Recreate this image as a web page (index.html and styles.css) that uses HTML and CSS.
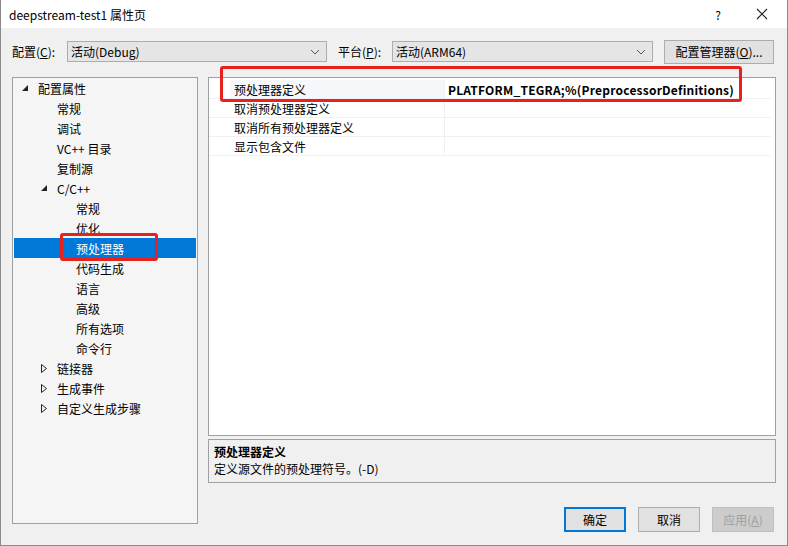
FILE: index.html
```html
<!DOCTYPE html>
<html>
<head>
  <title>deepstream-test1 属性页</title>
  <link rel="stylesheet" href="styles.css">
</head>
<body>
  <div class="window">
    <div class="titlebar">
      <div class="title">deepstream-test1 属性页</div>
      <div class="help">?</div>
      <div class="close">
        <svg width="12" height="12" viewBox="0 0 12 12"><path d="M1 1L11 11M11 1L1 11" stroke="#222" stroke-width="1.1" fill="none"/></svg>
      </div>
    </div>
    <div class="client">
      <div class="configrow">
        <span class="label">配置(<u>C</u>):</span>
        <div class="combo c1">
          <span>活动(Debug)</span>
          <svg width="10" height="6" viewBox="0 0 10 6"><path d="M1 1L5 5L9 1" stroke="#555" stroke-width="1" fill="none"/></svg>
        </div>
        <span class="label plat">平台(<u>P</u>):</span>
        <div class="combo c2">
          <span>活动(ARM64)</span>
          <svg width="10" height="6" viewBox="0 0 10 6"><path d="M1 1L5 5L9 1" stroke="#555" stroke-width="1" fill="none"/></svg>
        </div>
        <div class="btn mgr">配置管理器(<u>O</u>)...</div>
      </div>
      <div class="main">
        <div class="tree">
          <div class="item l0"><span class="tw"><svg width="7" height="7" viewBox="0 0 7 7"><path d="M6 0L6 6L0 6Z" fill="#222"/></svg></span>配置属性</div>
          <div class="item l1"><span class="tw"></span>常规</div>
          <div class="item l1"><span class="tw"></span>调试</div>
          <div class="item l1"><span class="tw"></span>VC++ 目录</div>
          <div class="item l1"><span class="tw"></span>复制源</div>
          <div class="item l1"><span class="tw"><svg width="7" height="7" viewBox="0 0 7 7"><path d="M6 0L6 6L0 6Z" fill="#222"/></svg></span>C/C++</div>
          <div class="item l2"><span class="tw"></span>常规</div>
          <div class="item l2"><span class="tw"></span>优化</div>
          <div class="item l2 selected"><span class="tw"></span>预处理器<div class="mark mark-tree"></div></div>
          <div class="item l2"><span class="tw"></span>代码生成</div>
          <div class="item l2"><span class="tw"></span>语言</div>
          <div class="item l2"><span class="tw"></span>高级</div>
          <div class="item l2"><span class="tw"></span>所有选项</div>
          <div class="item l2"><span class="tw"></span>命令行</div>
          <div class="item l1"><span class="tw"><svg width="6" height="9" viewBox="0 0 6 9"><path d="M0.5 0.5L5.5 4.5L0.5 8.5Z" stroke="#222" stroke-width="1" fill="none"/></svg></span>链接器</div>
          <div class="item l1"><span class="tw"><svg width="6" height="9" viewBox="0 0 6 9"><path d="M0.5 0.5L5.5 4.5L0.5 8.5Z" stroke="#222" stroke-width="1" fill="none"/></svg></span>生成事件</div>
          <div class="item l1"><span class="tw"><svg width="6" height="9" viewBox="0 0 6 9"><path d="M0.5 0.5L5.5 4.5L0.5 8.5Z" stroke="#222" stroke-width="1" fill="none"/></svg></span>自定义生成步骤</div>
        </div>
        <div class="right">
          <div class="grid">
            <div class="row first">
              <div class="gutter"></div>
              <div class="name">预处理器定义</div>
              <div class="value">PLATFORM_TEGRA;%(PreprocessorDefinitions)</div>
            </div>
            <div class="row">
              <div class="gutter"></div>
              <div class="name">取消预处理器定义</div>
              <div class="value"></div>
            </div>
            <div class="row">
              <div class="gutter"></div>
              <div class="name">取消所有预处理器定义</div>
              <div class="value"></div>
            </div>
            <div class="row">
              <div class="gutter"></div>
              <div class="name">显示包含文件</div>
              <div class="value"></div>
            </div>
            <div class="mark mark-grid"></div>
          </div>
          <div class="desc">
            <div class="dtitle">预处理器定义</div>
            <div class="dtext">定义源文件的预处理符号。(-D)</div>
          </div>
          <div class="buttons">
            <div class="btn ok">确定</div>
            <div class="btn">取消</div>
            <div class="btn disabled">应用(<u>A</u>)</div>
          </div>
        </div>
      </div>
    </div>
  </div>
</body>
</html>
```

FILE: styles.css
```css
html, body {
  margin: 0;
  padding: 0;
}
body {
  font-family: "Noto Sans CJK SC", "Noto Sans", sans-serif;
  font-size: 12px;
  color: #000;
}
.window {
  width: 788px;
  height: 546px;
  box-sizing: border-box;
  border: 1px solid #8a8a8a;
  border-top: none;
  background: #f0f0f0;
  display: flex;
  flex-direction: column;
}
.titlebar {
  height: 28px;
  background: #fff;
  display: flex;
  align-items: center;
  flex-shrink: 0;
}
.title {
  flex: 1;
  padding-left: 8px;
  font-size: 12px;
  color: #000;
}
.help {
  width: 20px;
  text-align: center;
  margin-right: 24px;
  font-size: 12px;
}
.close {
  width: 20px;
  display: flex;
  justify-content: center;
  margin-right: 15px;
}
.client {
  flex: 1;
  padding: 12px 0 0 11px;
}
.configrow {
  display: flex;
  align-items: center;
  height: 23px;
}
.label {
  width: 55px;
}
.label.plat {
  width: 54px;
  margin-left: 11px;
}
.combo {
  height: 21px;
  box-sizing: border-box;
  border: 1px solid #adadad;
  background: #e5e5e5;
  display: flex;
  align-items: center;
  justify-content: space-between;
  padding: 0 6px 0 3px;
}
.c1 {
  width: 260px;
}
.c2 {
  width: 261px;
}
.btn {
  height: 25px;
  box-sizing: border-box;
  border: 1px solid #adadad;
  background: #e1e1e1;
  display: flex;
  align-items: center;
  justify-content: center;
}
.mgr {
  width: 110px;
  height: 24px;
  margin-left: 11px;
}
.main {
  display: flex;
  margin-top: 14px;
  position: relative;
}
.tree {
  width: 186px;
  height: 447px;
  box-sizing: border-box;
  border: 1px solid #a0a0a0;
  background: #f5f5f5;
  padding: 0 1px;
}
.item {
  height: 20px;
  display: flex;
  align-items: center;
  position: relative;
  white-space: nowrap;
}
.tw {
  width: 14px;
  display: flex;
  justify-content: center;
  align-items: center;
  margin-right: 6px;
}
.l0 {
  padding-left: 4px;
}
.l1 {
  padding-left: 23px;
}
.l2 {
  padding-left: 42px;
}
.selected {
  background: #0078d7;
  color: #fff;
}
.mark {
  position: absolute;
  border: 3px solid #e8211c;
  border-radius: 3px;
  box-sizing: border-box;
  pointer-events: none;
}
.mark-tree {
  left: 46px;
  top: -5px;
  width: 98px;
  height: 28px;
}
.right {
  margin-left: 10px;
  width: 568px;
  display: flex;
  flex-direction: column;
}
.grid {
  height: 359px;
  box-sizing: border-box;
  border: 1px solid #a0a0a0;
  background: #fff;
  padding-top: 2px;
  position: relative;
}
.row {
  display: flex;
  height: 18px;
  border-bottom: 1px solid #f0f0f4;
  margin-right: 4px;
}
.gutter {
  width: 21px;
  background: #fff;
}
.name {
  width: 215px;
  padding-left: 4px;
  box-sizing: border-box;
  display: flex;
  align-items: center;
  border-right: 1px solid #f0f0f4;
}
.first .name {
  background: #f5f7fb;
}
.value {
  flex: 1;
  padding-left: 3px;
  display: flex;
  align-items: center;
  font-weight: bold;
  letter-spacing: 0.22px;
}
.mark-grid {
  left: 11px;
  top: -12px;
  width: 522px;
  height: 36px;
}
.desc {
  margin-top: 3px;
  height: 44px;
  box-sizing: border-box;
  border: 1px solid #a0a0a0;
  background: #f0f0f0;
  padding: 3px 5px;
  line-height: 17px;
}
.dtitle {
  font-weight: bold;
}
.buttons {
  margin-top: 24px;
  display: flex;
  justify-content: flex-end;
  gap: 12px;
  padding-right: 2px;
}
.buttons .btn {
  width: 62px;
}
.ok {
  border: 2px solid #0078d7;
}
.disabled {
  background: #cccccc;
  border-color: #bfbfbf;
  color: #a0a0a0;
}
```
